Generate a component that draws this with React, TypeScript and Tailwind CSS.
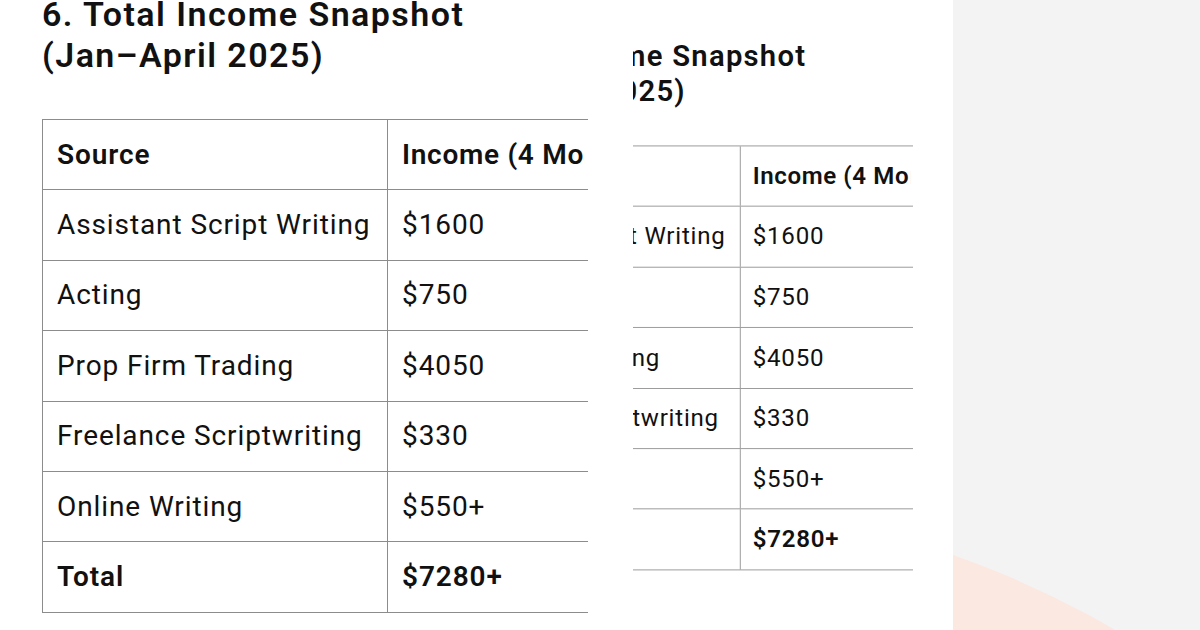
const rows = [
  { source: "Assistant Script Writing", income: "$1600" },
  { source: "Acting", income: "$750" },
  { source: "Prop Firm Trading", income: "$4050" },
  { source: "Freelance Scriptwriting", income: "$330" },
  { source: "Online Writing", income: "$550+" },
];

function Snapshot() {
  return (
    <div className="w-[760px] pl-[42px] text-[#111]">
      <h2 className="text-[34px] font-semibold leading-[41px] tracking-[1.45px] -mt-[6px]">
        6. Total Income Snapshot
        <br />
        (Jan–April 2025)
      </h2>

      {/* Income table */}
      <div className="mt-[43px] border-t border-l border-[#8c8c8c] text-[28px] tracking-[0.9px]">
        <div className="flex h-[70.4px] border-b border-[#8c8c8c] font-semibold">
          <div className="w-[345px] shrink-0 border-r border-[#8c8c8c] pl-[14px] flex items-center">Source</div>
          <div className="w-[197px] overflow-hidden pl-[14px] flex items-center whitespace-nowrap tracking-[0.7px]">
            Income (4 Months)
          </div>
        </div>
        {rows.map((row) => (
          <div key={row.source} className="flex h-[70.4px] border-b border-[#8c8c8c]">
            <div className="w-[345px] shrink-0 border-r border-[#8c8c8c] pl-[14px] flex items-center whitespace-nowrap">
              {row.source}
            </div>
            <div className="pl-[14px] flex items-center">{row.income}</div>
          </div>
        ))}
        <div className="flex h-[70.4px] border-b border-[#8c8c8c] font-semibold">
          <div className="w-[345px] shrink-0 border-r border-[#8c8c8c] pl-[14px] flex items-center">Total</div>
          <div className="pl-[14px] flex items-center">$7280+</div>
        </div>
      </div>
    </div>
  );
}

export default function App() {
  return (
    <div className="flex w-[1200px] h-[630px] overflow-hidden bg-white font-['Roboto',sans-serif]">
      <div className="flex w-[953px] shrink-0">
        {/* Main slide, clipped */}
        <div className="w-[588px] shrink-0 overflow-hidden">
          <Snapshot />
        </div>
        <div className="w-[45px] shrink-0" />
        {/* Scaled preview of the same slide */}
        <div className="w-[280px] shrink-0 overflow-hidden">
          <div className="ml-[-226px] mt-[44px] origin-top-left scale-[0.86]">
            <Snapshot />
          </div>
        </div>
      </div>

      {/* Side panel */}
      <div className="relative flex-1 bg-[#f3f3f3] overflow-hidden">
        <div className="absolute left-[-1262px] top-[501px] w-[1894px] h-[1894px] rounded-full bg-[#fbe8e0]" />
      </div>
    </div>
  );
}
